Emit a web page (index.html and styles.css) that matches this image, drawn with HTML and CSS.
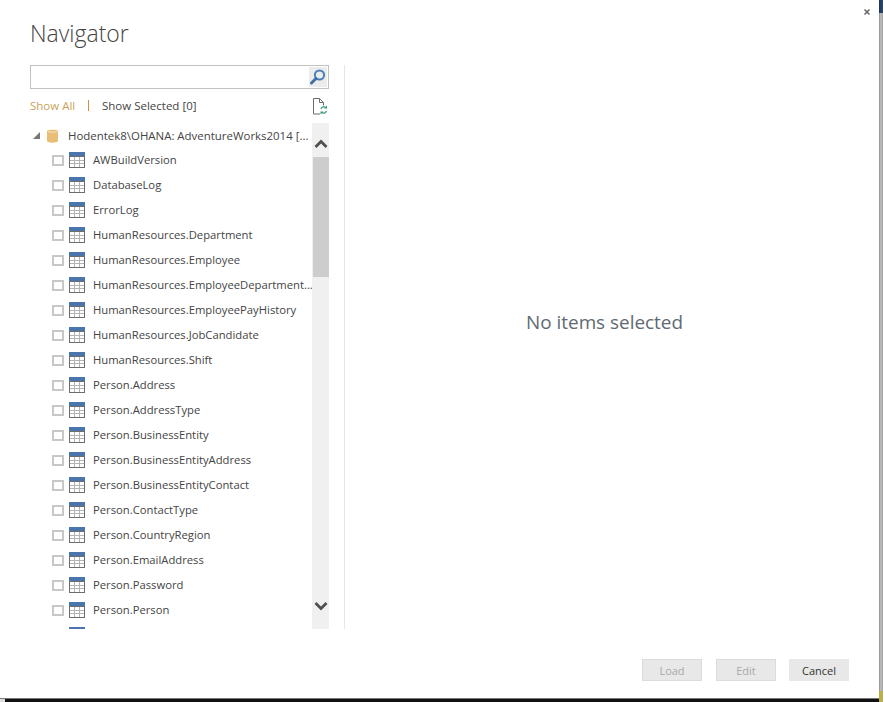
FILE: index.html
```html
<!DOCTYPE html>
<html lang="en">
<head>
<meta charset="utf-8">
<title>Navigator</title>
<link rel="stylesheet" href="styles.css">
</head>
<body>
<svg class="sprites" width="0" height="0" aria-hidden="true">
  <symbol id="tbl" viewBox="0 0 16 16">
    <rect x="0" y="0" width="16" height="16" fill="#6d6d6d"/>
    <rect x="0" y="0" width="16" height="4" fill="#4a76ac"/>
    <rect x="1" y="5" width="14" height="10" fill="#fff"/>
    <path d="M5.5 5v10M10.5 5v10M1 8.5h14M1 11.5h14" stroke="#b4b4b4" stroke-width="1" fill="none"/>
  </symbol>
</svg>
<div class="stage">
  <div class="column">
    <div class="dialog">
      <svg class="close" width="6" height="6" viewBox="0 0 6 6"><path d="M.5.500l5 5M5.500.500l-5 5" stroke="#666" stroke-width="1.500"/></svg>
      <div class="title">Navigator</div>
      <div class="main">
        <div class="left">
          <div class="search">
            <div class="search-btn">
              <svg width="18" height="18" viewBox="0 0 18 18"><circle cx="10.500" cy="7" r="4.600" fill="none" stroke="#4a7fb8" stroke-width="2"/><path d="M7 10.500 2.500 15" stroke="#3f6fa6" stroke-width="3" stroke-linecap="round"/></svg>
            </div>
          </div>
          <div class="filters">
            <span class="show-all">Show All</span>
            <span class="sep"></span>
            <span class="show-sel">Show Selected [0]</span>
            <svg class="refresh" width="14" height="17" viewBox="0 0 14 17"><path d="M.5.500h6l4 4v3M10.500 4.500h-4v-4M.5.500v15.500h6.500" fill="none" stroke="#6d6d6d"/><path d="M8 11a2.800 2.800 0 0 1 4.800-1.200M13.500 13a2.800 2.800 0 0 1-4.800 1.200" fill="none" stroke="#3f9a78" stroke-width="1.300"/><path d="M14 7.500v3h-3zM7.500 16.500v-3h3z" fill="#3f9a78"/></svg>
          </div>
          <div class="tree-wrap">
            <div class="tree">
              <div class="root">
                <span class="arrow"></span>
                <svg class="db" width="11" height="14" viewBox="0 0 11 14"><path d="M0 2C0 .2 11 .2 11 2V12C11 14.200 0 14.200 0 12Z" fill="#e9bf78"/><path d="M1 2.500c2 1 7 1 9 0" fill="none" stroke="#f7e6c6"/></svg>
                <span class="root-label">Hodentek8\OHANA: AdventureWorks2014 [...</span>
              </div>
              <div class="row"><span class="cb"></span><svg class="ti"><use href="#tbl"/></svg><span class="lbl">AWBuildVersion</span></div>
              <div class="row"><span class="cb"></span><svg class="ti"><use href="#tbl"/></svg><span class="lbl">DatabaseLog</span></div>
              <div class="row"><span class="cb"></span><svg class="ti"><use href="#tbl"/></svg><span class="lbl">ErrorLog</span></div>
              <div class="row"><span class="cb"></span><svg class="ti"><use href="#tbl"/></svg><span class="lbl">HumanResources.Department</span></div>
              <div class="row"><span class="cb"></span><svg class="ti"><use href="#tbl"/></svg><span class="lbl">HumanResources.Employee</span></div>
              <div class="row"><span class="cb"></span><svg class="ti"><use href="#tbl"/></svg><span class="lbl">HumanResources.EmployeeDepartment...</span></div>
              <div class="row"><span class="cb"></span><svg class="ti"><use href="#tbl"/></svg><span class="lbl">HumanResources.EmployeePayHistory</span></div>
              <div class="row"><span class="cb"></span><svg class="ti"><use href="#tbl"/></svg><span class="lbl">HumanResources.JobCandidate</span></div>
              <div class="row"><span class="cb"></span><svg class="ti"><use href="#tbl"/></svg><span class="lbl">HumanResources.Shift</span></div>
              <div class="row"><span class="cb"></span><svg class="ti"><use href="#tbl"/></svg><span class="lbl">Person.Address</span></div>
              <div class="row"><span class="cb"></span><svg class="ti"><use href="#tbl"/></svg><span class="lbl">Person.AddressType</span></div>
              <div class="row"><span class="cb"></span><svg class="ti"><use href="#tbl"/></svg><span class="lbl">Person.BusinessEntity</span></div>
              <div class="row"><span class="cb"></span><svg class="ti"><use href="#tbl"/></svg><span class="lbl">Person.BusinessEntityAddress</span></div>
              <div class="row"><span class="cb"></span><svg class="ti"><use href="#tbl"/></svg><span class="lbl">Person.BusinessEntityContact</span></div>
              <div class="row"><span class="cb"></span><svg class="ti"><use href="#tbl"/></svg><span class="lbl">Person.ContactType</span></div>
              <div class="row"><span class="cb"></span><svg class="ti"><use href="#tbl"/></svg><span class="lbl">Person.CountryRegion</span></div>
              <div class="row"><span class="cb"></span><svg class="ti"><use href="#tbl"/></svg><span class="lbl">Person.EmailAddress</span></div>
              <div class="row"><span class="cb"></span><svg class="ti"><use href="#tbl"/></svg><span class="lbl">Person.Password</span></div>
              <div class="row"><span class="cb"></span><svg class="ti"><use href="#tbl"/></svg><span class="lbl">Person.Person</span></div>
              <div class="row"><span class="cb cb-hidden"></span><svg class="ti"><use href="#tbl"/></svg></div>
            </div>
            <div class="scrollbar">
              <svg class="chev chev-up" width="14" height="12" viewBox="0 0 14 12"><path d="M1.500 9 7 3.500 12.500 9" fill="none" stroke="#505050" stroke-width="2.800"/></svg>
              <div class="thumb"></div>
              <div class="track"></div>
              <svg class="chev chev-down" width="14" height="12" viewBox="0 0 14 12"><path d="M1.500 3 7 8.500 12.500 3" fill="none" stroke="#505050" stroke-width="2.800"/></svg>
            </div>
          </div>
        </div>
        <div class="right">No items selected</div>
      </div>
      <div class="footer">
        <button class="btn disabled">Load</button>
        <button class="btn disabled">Edit</button>
        <button class="btn cancel">Cancel</button>
      </div>
    </div>
    <div class="shadow"><span class="corner"></span></div>
  </div>
  <div class="strip">
    <div class="strip-blue"></div>
    <div class="strip-gray"></div>
    <div class="strip-olive"></div>
  </div>
</div>
</body>
</html>
```
FILE: styles.css
```css
* { box-sizing: border-box; }
html, body { margin: 0; padding: 0; }
body { width: 883px; height: 702px; overflow: hidden; background: #111; font-family: "Open Sans", "Liberation Sans", sans-serif; }
.sprites { position: absolute; }
.stage { display: flex; width: 883px; height: 702px; }
.column { width: 879px; height: 702px; display: flex; flex-direction: column; }
.dialog { position: relative; width: 879px; height: 698px; background: #fff; display: flex; flex-direction: column; }
.close { position: absolute; top: 9px; left: 864px; }
.title { margin: 17px 0 0 30px; height: 32px; font-size: 23px; font-weight: 300; line-height: 32px; color: #444; }
.main { display: flex; margin-top: 16px; height: 565px; }
.left { width: 314px; margin-left: 30px; flex: none; display: flex; flex-direction: column; }
.search { width: 299px; height: 24px; border: 1px solid #c2c2c2; display: flex; justify-content: flex-end; padding: 1px; }
.search-btn { width: 18px; height: 20px; background: #ececec; display: flex; align-items: center; justify-content: center; }
.filters { display: flex; align-items: center; height: 20px; margin-top: 6px; width: 299px; font-size: 11.500px; position: relative; }
.show-all { color: #c9a35a; width: 58px; flex: none; }
.sep { width: 1px; height: 11px; background: #d98a3d; flex: none; }
.show-sel { color: #444; margin-left: 13px; }
.refresh { position: absolute; right: 2px; top: 3px; }
.tree-wrap { display: flex; margin-top: 8px; height: 506px; width: 299px; }
.tree { width: 282px; height: 506px; overflow-x: visible; overflow-y: clip; font-size: 11.250px; color: #444; flex: none; }
.root { height: 25px; display: flex; align-items: center; }
.arrow { width: 0; height: 0; margin-left: 3px; flex: none; border-style: solid; border-width: 0 0 7px 7px; border-color: transparent transparent #777 transparent; }
.db { margin-left: 7px; flex: none; }
.root-label { margin-left: 10px; white-space: nowrap; font-size: 11.450px; }
.row { height: 25px; display: flex; align-items: flex-start; padding-left: 22px; }
.cb { width: 12px; height: 11px; margin-top: 7px; border: 2px solid #c8c8c8; background: #fff; flex: none; }
.cb-hidden { visibility: hidden; }
.ti { width: 16px; height: 16px; margin: 4px 0 0 5px; flex: none; }
.lbl { margin-left: 8px; white-space: nowrap; line-height: 24px; }
.scrollbar { width: 17px; height: 506px; background: #f0f0f0; display: flex; flex-direction: column; align-items: center; flex: none; }
.chev { flex: none; }
.chev-up { margin-top: 15px; }
.thumb { width: 16px; height: 120px; margin-top: 7px; background: #cdcdcd; flex: none; }
.track { flex: 1; }
.chev-down { margin-bottom: 17px; }
.right { flex: 1; height: 564px; border-left: 1px solid #e6e6e6; display: flex; align-items: center; justify-content: center; font-size: 18.900px; color: #5f6a72; padding: 0 15px 50px 0; }
.footer { display: flex; justify-content: flex-end; margin-top: 29px; padding-right: 30px; }
.btn { width: 60px; height: 22px; margin-left: 14px; padding: 0; font: 11px "Open Sans", "Liberation Sans", sans-serif; background: #e8e8e8; border: 1px solid #e8e8e8; color: #333; }
.btn.disabled { color: #a8a8a8; border-color: #dcdcdc; }
.btn.cancel { margin-left: 13px; }
.shadow { height: 4px; border-top: 1px solid #777; background: #111; }
.corner { display: block; width: 5px; height: 3px; background: #ddd; }
.strip { width: 4px; height: 702px; display: flex; flex-direction: column; }
.strip-blue { height: 13px; background: linear-gradient(to right, #1e3350, #2c4a72); }
.strip-gray { flex: 1; background: linear-gradient(to right, #8c8c8c, #c4c4c4, #9a9a9a); }
.strip-olive { height: 11px; background: #b9b04a; }
```
